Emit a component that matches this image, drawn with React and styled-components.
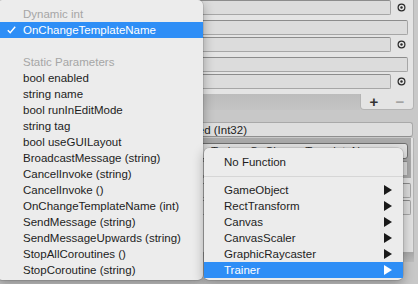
import React from "react";
import styled, { createGlobalStyle } from "styled-components";

const GlobalStyle = createGlobalStyle`
  html, body { margin: 0; padding: 0; }
  body {
    background: #c8c8c8;
    font-family: "Liberation Sans", Arial, sans-serif;
    -webkit-font-smoothing: antialiased;
  }
`;

const Page = styled.div`
  position: relative;
  width: 418px;
  height: 284px;
  overflow: hidden;
  background: #c8c8c8;
  font-size: 11.5px;
  color: #1d1d1d;
`;

const Inspector = styled.div`
  display: flex;
  flex-direction: column;
  padding-left: 4px;
`;

const ListBody = styled.div`
  display: flex;
  flex-direction: column;
  gap: 5px;
  margin-right: 4px;
  padding: 0 5px 5px 6px;
  background: #e4e4e4;
  border-right: 1px solid #b4b4b4;
`;

const Entry = styled.div`
  display: flex;
  flex-direction: column;
  gap: 2px;
`;

const SelectedEntry = styled(Entry)`
  background: #a9a9a9;
  padding: 5px 3px 2px 3px;
`;

const Row = styled.div`
  display: flex;
  align-items: center;
  height: 15px;
`;

const Field = styled.div`
  flex: 1;
  height: 15px;
  box-sizing: border-box;
  background: #dcdcdc;
  border: 1px solid #a6a6a6;
  border-top-color: #8c8c8c;
  border-radius: 2px;
`;

const PickerSlot = styled.div`
  width: 17px;
  display: flex;
  justify-content: flex-end;
  padding-right: 2px;
  box-sizing: border-box;
`;

const FooterRow = styled.div`
  display: flex;
  height: 16px;
  margin-right: 4px;
`;

const FooterShade = styled.div`
  flex: 1;
  background: linear-gradient(#bcbcbc, #c4c4c4);
`;

const FooterTab = styled.div`
  width: 54px;
  display: flex;
  align-items: center;
  justify-content: space-around;
  background: #e4e4e4;
  border: 1px solid #b4b4b4;
  border-top: none;
  border-radius: 0 0 4px 4px;
  box-sizing: border-box;
  font-size: 15px;
  font-weight: bold;
  line-height: 1;
`;

const FooterButton = styled.span`
  color: ${(p) => (p.$disabled ? "#a3a3a3" : "#333333")};
`;

const HeaderField = styled.div`
  margin: 12px 5px 0 0;
  height: 15px;
  box-sizing: border-box;
  background: #dedede;
  border: 1px solid #a9a9a9;
  border-bottom-color: #8f8f8f;
  border-radius: 3px;
  display: flex;
  align-items: center;
  overflow: hidden;
`;

const HeaderLabelBox = styled.div`
  width: 242px;
  flex: none;
  display: flex;
  justify-content: flex-end;
  overflow: hidden;
`;

const HeaderLabel = styled.span`
  flex: none;
  white-space: nowrap;
  color: #222;
`;

const SecondBody = styled.div`
  display: flex;
  flex-direction: column;
  gap: 5px;
  margin: 1px 4px 0 0;
  padding: 0 2px 6px 3px;
  height: 114px;
  box-sizing: border-box;
  background: #e2e2e2;
  border-right: 1px solid #b4b4b4;
`;

const PopupField = styled.div`
  height: 16px;
  box-sizing: border-box;
  background: #e2e2e2;
  border: 1px solid #6f6f6f;
  border-radius: 3px;
  display: flex;
  align-items: center;
  padding-left: 200px;
  white-space: nowrap;
  overflow: hidden;
  color: #333;
`;

const SecondShade = styled.div`
  height: 10px;
  margin-right: 4px;
  background: linear-gradient(#a8a8a8, #bdbdbd);
`;

/* ---------- Menus ---------- */

const Menu = styled.div`
  position: absolute;
  left: ${(p) => p.$left}px;
  top: ${(p) => p.$top}px;
  width: ${(p) => p.$width}px;
  box-sizing: border-box;
  padding: 6px 0 2px;
  background: #ececec;
  border-radius: 5px;
  box-shadow: 0 0 0 0.5px rgba(0, 0, 0, 0.18), 0 4px 12px rgba(0, 0, 0, 0.32);
  display: flex;
  flex-direction: column;
`;

const Item = styled.div`
  position: relative;
  height: 16px;
  display: flex;
  align-items: center;
  padding-left: ${(p) => p.$indent}px;
  padding-right: 11px;
  white-space: nowrap;
  color: ${(p) => (p.$active ? "#ffffff" : p.$header ? "#a6a6a6" : "#1d1d1d")};
  background: ${(p) => (p.$active ? "#2e8ef6" : "transparent")};
`;

const ItemText = styled.span`
  flex: 1;
`;

const Check = styled.svg`
  position: absolute;
  left: 10px;
  top: 4px;
`;

const Separator = styled.div`
  height: 12px;
  display: flex;
  align-items: center;
  &::after {
    content: "";
    flex: 1;
    height: 1px;
    background: #d6d6d6;
  }
`;

const Picker = () => (
  <svg width="9" height="9" viewBox="0 0 9 9">
    <circle cx="4.5" cy="4.5" r="3.4" fill="none" stroke="#2a2a2a" strokeWidth="1.2" />
    <circle cx="4.5" cy="4.5" r="1.2" fill="#2a2a2a" />
  </svg>
);

const Arrow = ({ color }) => (
  <svg width="8" height="10" viewBox="0 0 8 10">
    <polygon points="0,0 8,5 0,10" fill={color} />
  </svg>
);

const PickerRow = () => (
  <Row>
    <Field />
    <PickerSlot>
      <Picker />
    </PickerSlot>
  </Row>
);

const FullRow = () => (
  <Row>
    <Field />
  </Row>
);

const leftItems = [
  { t: "Dynamic int", header: true },
  { t: "OnChangeTemplateName", active: true, check: true },
  { t: "" },
  { t: "Static Parameters", header: true },
  { t: "bool enabled" },
  { t: "string name" },
  { t: "bool runInEditMode" },
  { t: "string tag" },
  { t: "bool useGUILayout" },
  { t: "BroadcastMessage (string)" },
  { t: "CancelInvoke (string)" },
  { t: "CancelInvoke ()" },
  { t: "OnChangeTemplateName (int)" },
  { t: "SendMessage (string)" },
  { t: "SendMessageUpwards (string)" },
  { t: "StopAllCoroutines ()" },
  { t: "StopCoroutine (string)" },
];

const rightItems = [
  { t: "GameObject" },
  { t: "RectTransform" },
  { t: "Canvas" },
  { t: "CanvasScaler" },
  { t: "GraphicRaycaster" },
  { t: "Trainer", active: true },
];

export default function App() {
  return (
    <Page>
      <GlobalStyle />
      <Inspector>
        <ListBody>
          <PickerRow />
          <Entry>
            <FullRow />
            <PickerRow />
          </Entry>
          <Entry>
            <FullRow />
            <PickerRow />
          </Entry>
        </ListBody>
        <FooterRow>
          <FooterShade />
          <FooterTab>
            <FooterButton>+</FooterButton>
            <FooterButton $disabled>−</FooterButton>
          </FooterTab>
        </FooterRow>
        <HeaderField>
          <HeaderLabelBox>
            <HeaderLabel>On Value Changed (Int32)</HeaderLabel>
          </HeaderLabelBox>
        </HeaderField>
        <SecondBody>
          <SelectedEntry>
            <PopupField>Trainer.OnChangeTemplateName</PopupField>
            <FullRow />
          </SelectedEntry>
          <Entry>
            <FullRow />
            <FullRow />
          </Entry>
        </SecondBody>
        <SecondShade />
      </Inspector>

      <Menu $left={-3} $top={0} $width={206}>
        {leftItems.map((it, i) => (
          <Item key={i} $indent={26} $active={it.active} $header={it.header}>
            {it.check && (
              <Check width="9" height="8" viewBox="0 0 9 8">
                <polyline points="0.8,4.2 3.2,6.8 8.2,0.8" fill="none" stroke="#fff" strokeWidth="1.4" />
              </Check>
            )}
            <ItemText>{it.t}</ItemText>
          </Item>
        ))}
      </Menu>

      <Menu $left={204} $top={148} $width={199}>
        <Item $indent={20}>
          <ItemText>No Function</ItemText>
        </Item>
        <Separator />
        {rightItems.map((it, i) => (
          <Item key={i} $indent={20} $active={it.active}>
            <ItemText>{it.t}</ItemText>
            <Arrow color={it.active ? "#ffffff" : "#1a1a1a"} />
          </Item>
        ))}
      </Menu>
    </Page>
  );
}
